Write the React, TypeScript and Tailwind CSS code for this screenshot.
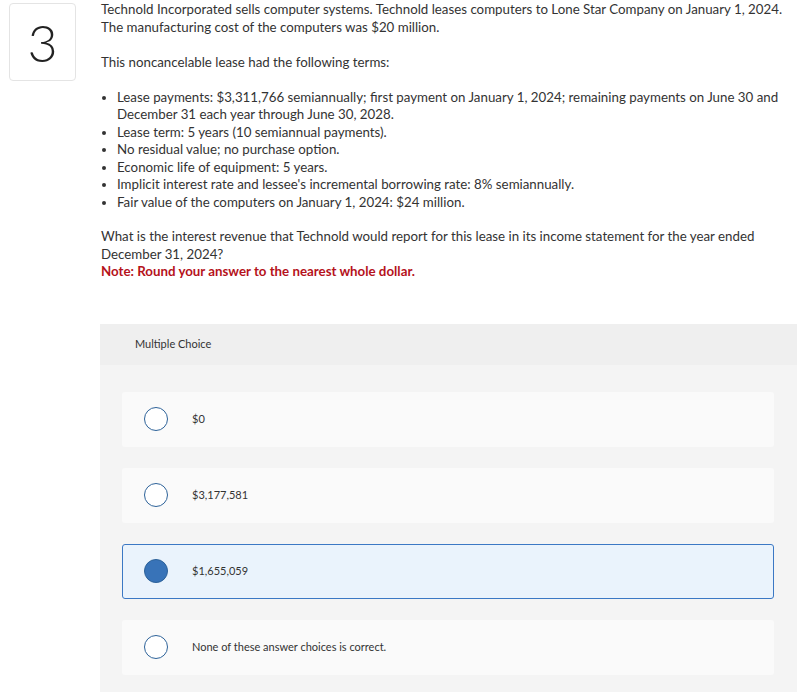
import { useState } from "react";

const termos = [
  "Lease payments: $3,311,766 semiannually; first payment on January 1, 2024; remaining payments on June 30 and December 31 each year through June 30, 2028.",
  "Lease term: 5 years (10 semiannual payments).",
  "No residual value; no purchase option.",
  "Economic life of equipment: 5 years.",
  "Implicit interest rate and lessee's incremental borrowing rate: 8% semiannually.",
  "Fair value of the computers on January 1, 2024: $24 million.",
];

const opcoes = ["$0", "$3,177,581", "$1,655,059", "None of these answer choices is correct."];

export default function App() {
  const [selected, setSelected] = useState(2);

  return (
    <div className="w-[803px] h-[692px] overflow-hidden bg-white text-[#333] font-['Lato','Liberation_Sans',sans-serif] flex">
      {/* question number */}
      <div className="w-[100px] shrink-0 pl-[9px] pt-[3px]">
        <div className="w-[67px] h-[78px] border border-[#e4e4e4] rounded-[4px] flex items-center justify-center text-[52px] font-light text-[#222] leading-none">
          3
        </div>
      </div>

      <div className="flex-1 pr-[6px]">
        <div className="pl-[1px] pr-[4px] text-[13.3px] leading-[17.5px] pt-[1px]">
          <p>
            Technold Incorporated sells computer systems. Technold leases computers to Lone Star Company on January 1, 2024.
            The manufacturing cost of the computers was $20 million.
          </p>
          <p className="mt-[18px]">This noncancelable lease had the following terms:</p>
          <ul className="mt-[17px] list-disc pl-[16px]">
            {termos.map((t) => (
              <li key={t}>{t}</li>
            ))}
          </ul>
          <p className="mt-[17px]">
            What is the interest revenue that Technold would report for this lease in its income statement for the year ended
            December 31, 2024?
          </p>
          <p className="font-bold text-[#b5121b]">Note: Round your answer to the nearest whole dollar.</p>
        </div>

        <div className="mt-[43px] bg-[#f4f4f4] pb-[40px]">
          <div className="h-[41px] bg-[#efefef] flex items-center pl-[35px] text-[11px] text-[#333]">Multiple Choice</div>
          <div className="pt-[27px] pl-[22px] pr-[23px] flex flex-col gap-[21px]">
            {opcoes.map((o, i) => {
              const on = i === selected;
              return (
                <button
                  key={o}
                  onClick={() => setSelected(i)}
                  className={`h-[55px] rounded-[3px] flex items-center text-left pl-[21px] ${
                    on ? "bg-[#eaf3fc] border border-[#3b78c4]" : "bg-[#fafafa] border border-transparent"
                  }`}
                >
                  <span
                    className={`w-[24px] h-[24px] rounded-full shrink-0 ${
                      on ? "bg-[#3873b8] border border-[#2d6299]" : "bg-white border-[1.5px] border-[#2d6299]"
                    }`}
                  />
                  <span className="ml-[24px] text-[11px] text-[#333]">{o}</span>
                </button>
              );
            })}
          </div>
        </div>
      </div>
    </div>
  );
}
